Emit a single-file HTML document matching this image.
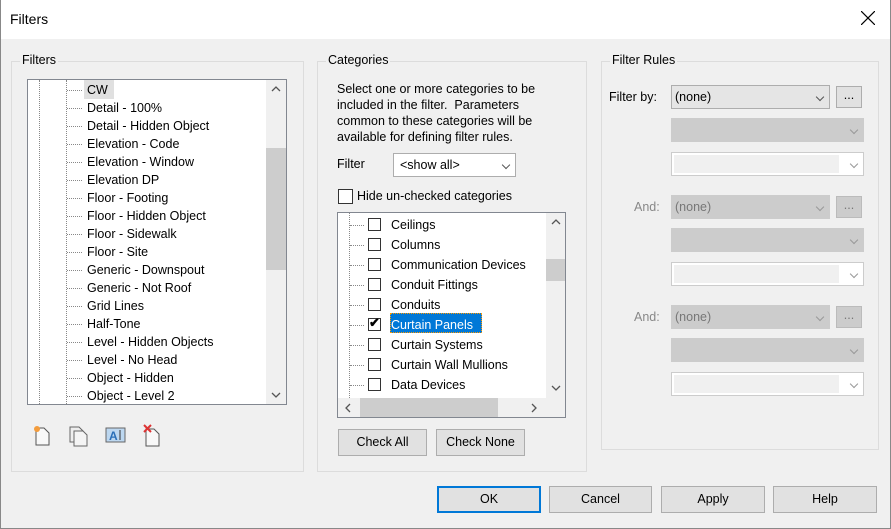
<!DOCTYPE html><html><head><style>
*{box-sizing:border-box}
body{margin:0;width:891px;height:529px;background:#f0f0f0;font-family:"Liberation Sans",sans-serif;font-size:12.5px;color:#000;position:relative;overflow:hidden}
.a{position:absolute}
.grp{position:absolute;border:1px solid #dcdcdc}
.lg{position:absolute;background:#f0f0f0;padding:0 2px;top:-9px;left:8px}
.btn{position:absolute;border:1px solid #adadad;background:#e1e1e1;text-align:center;line-height:24px}
.cb{position:absolute;width:13px;height:13px;border:1px solid #333;background:#fff}
.combo{position:absolute;border:1px solid #adadad;background:#e5e5e5;height:24px;line-height:22px;padding-left:3px}
.dis{background:#ccc;border-color:#ccc}
.chev{position:absolute;right:6px;top:8px;width:6px;height:6px;border-right:1px solid #555;border-bottom:1px solid #555;transform:rotate(45deg)}
.dl{position:absolute;border-left:1px dotted #888}
.dh{position:absolute;border-top:1px dotted #888}
</style></head><body>
<div class="a" style="left:0;top:0;width:891px;height:39px;background:#fff"></div>
<div class="a" style="left:0;top:0;width:1px;height:529px;background:#888"></div>
<div class="a" style="left:890px;top:0;width:1px;height:529px;background:#888"></div>
<div class="a" style="left:0;top:528px;width:891px;height:1px;background:#888"></div>
<div class="a" style="left:10px;top:11px;font-size:14px">Filters</div>
<svg class="a" style="left:861px;top:11px" width="14" height="14"><path d="M0 0L14 14M14 0L0 14" stroke="#000" stroke-width="1.2"/></svg>

<div class="grp" style="left:11px;top:61px;width:293px;height:411px"><span class="lg">Filters</span></div>
<div class="a" style="left:27px;top:79px;width:260px;height:326px;background:#fff;border:1px solid #828790;overflow:hidden">
<div class="dl" style="left:11px;top:0;height:326px"></div>
<div class="dl" style="left:38px;top:0;height:326px"></div>
<div id="fh"></div>
<div class="a" style="left:56px;top:0;width:30px;height:19px;background:#e0e0e0"></div>
<div class="a" style="left:59px;top:1px;line-height:18px">CW<br>Detail - 100%<br>Detail - Hidden Object<br>Elevation - Code<br>Elevation - Window<br>Elevation DP<br>Floor - Footing<br>Floor - Hidden Object<br>Floor - Sidewalk<br>Floor - Site<br>Generic - Downspout<br>Generic - Not Roof<br>Grid Lines<br>Half-Tone<br>Level - Hidden Objects<br>Level - No Head<br>Object - Hidden<br>Object - Level 2</div>
<div class="a" style="left:238px;top:0;width:20px;height:326px;background:#f0f0f0"></div>
<div class="a" style="left:238px;top:68px;width:20px;height:122px;background:#cdcdcd"></div>
<svg class="a" style="left:243px;top:6px" width="10" height="6"><path d="M1 5L5 1L9 5" stroke="#555" fill="none" stroke-width="1.3"/></svg>
<svg class="a" style="left:243px;top:312px" width="10" height="6"><path d="M1 1L5 5L9 1" stroke="#555" fill="none" stroke-width="1.3"/></svg>
</div>
<svg class="a" style="left:32px;top:424px" width="140" height="24">
<path d="M4 4h8l5 5v12H4z" fill="#f8f8f8" stroke="#555"/><circle cx="5" cy="5" r="3" fill="#f39c3c"/>
<path d="M38 3h9l4 4v11H38z" fill="#eee" stroke="#666"/><path d="M42 7h9l4 4v11H42z" fill="#f4f4f4" stroke="#666"/>
<rect x="74" y="4" width="19" height="14" fill="#bcd7f0" stroke="#666"/><text x="77" y="16" font-size="12" font-weight="bold" fill="#2a6fb8" font-family="Liberation Sans">A</text><path d="M88 6v10" stroke="#333"/>
<path d="M114 5h8l5 5v12H114z" fill="#f8f8f8" stroke="#555"/><path d="M112 1l7 7M119 1l-7 7" stroke="#d33" stroke-width="2"/>
</svg>

<div class="grp" style="left:317px;top:61px;width:270px;height:411px"><span class="lg">Categories</span></div>
<div class="a" style="left:337px;top:81px;line-height:16px">Select one or more categories to be<br>included in the filter.&nbsp; Parameters<br>common to these categories will be<br>available for defining filter rules.</div>
<div class="a" style="left:337px;top:157px">Filter</div>
<div class="combo" style="left:393px;top:153px;width:123px;background:#fff;padding-left:6px">&lt;show all&gt;<span class="chev"></span></div>
<div class="cb" style="left:338px;top:189px;width:15px;height:15px"></div>
<div class="a" style="left:357px;top:189px">Hide un-checked categories</div>
<div class="a" style="left:337px;top:212px;width:229px;height:206px;background:#fff;border:1px solid #828790;overflow:hidden">
<div class="dl" style="left:11px;top:0;height:185px"></div>
<div class="a" style="left:52px;top:100px;width:92px;height:20px;background:#0078d7;border:1px dotted #f90"></div>
<div class="a" style="left:53px;top:2px;line-height:20px">Ceilings<br>Columns<br>Communication Devices<br>Conduit Fittings<br>Conduits<br><span style="color:#fff">Curtain Panels</span><br>Curtain Systems<br>Curtain Wall Mullions<br>Data Devices</div>
<div id="cbs"></div>
<div class="a" style="left:208px;top:0;width:20px;height:185px;background:#f0f0f0"></div>
<div class="a" style="left:208px;top:46px;width:20px;height:22px;background:#cdcdcd"></div>
<div class="a" style="left:0;top:185px;width:228px;height:20px;background:#f0f0f0"></div>
<div class="a" style="left:22px;top:185px;width:138px;height:20px;background:#cdcdcd"></div>
<svg class="a" style="left:7px;top:190px" width="6" height="10"><path d="M5 1L1 5L5 9" stroke="#555" fill="none" stroke-width="1.3"/></svg>
<svg class="a" style="left:193px;top:190px" width="6" height="10"><path d="M1 1L5 5L1 9" stroke="#555" fill="none" stroke-width="1.3"/></svg>
<svg class="a" style="left:213px;top:6px" width="10" height="6"><path d="M1 5L5 1L9 5" stroke="#555" fill="none" stroke-width="1.3"/></svg>
<svg class="a" style="left:213px;top:172px" width="10" height="6"><path d="M1 1L5 5L9 1" stroke="#555" fill="none" stroke-width="1.3"/></svg>
</div>
<script>
var h='';for(var i=0;i<9;i++){var y=5+i*20;h+='<div class="dh" style="left:12px;top:'+(y+7)+'px;width:14px"></div><div class="cb" style="left:30px;top:'+y+'px;border-color:#333">'+(i==5?'<span style="position:absolute;left:0;top:-4px;font-size:13px;font-weight:bold">✔</span>':'')+'</div>';}
document.getElementById('cbs').innerHTML=h;
var f='';for(var j=0;j<18;j++){f+='<div class="dh" style="left:39px;top:'+(10+j*18)+'px;width:15px"></div>';}
document.getElementById('fh').innerHTML=f;
</script>
<div class="btn" style="left:338px;top:429px;width:89px;height:27px">Check All</div>
<div class="btn" style="left:436px;top:429px;width:89px;height:27px">Check None</div>

<div class="grp" style="left:601px;top:61px;width:278px;height:389px"><span class="lg">Filter Rules</span></div>
<div class="a" style="left:609px;top:90px">Filter by:</div>
<div class="combo" style="left:671px;top:85px;width:159px">(none)<span class="chev"></span></div>
<div class="btn" style="left:836px;top:86px;width:26px;height:22px;line-height:16px">...</div>
<div class="combo dis" style="left:671px;top:118px;width:193px"><span class="chev" style="border-color:#999"></span></div>
<div class="combo" style="left:671px;top:152px;width:193px;background:#fff;border-color:#ccc"><div class="a" style="left:2px;top:2px;width:165px;height:18px;background:#f0f0f0"></div><span class="chev" style="border-color:#999"></span></div>
<div class="a" style="left:634px;top:200px;color:#888">And:</div>
<div class="combo dis" style="left:671px;top:195px;width:159px;color:#777">(none)<span class="chev" style="border-color:#999"></span></div>
<div class="btn" style="left:836px;top:196px;width:26px;height:22px;line-height:16px;background:#ccc;border-color:#bbb;color:#777">...</div>
<div class="combo dis" style="left:671px;top:228px;width:193px"><span class="chev" style="border-color:#999"></span></div>
<div class="combo" style="left:671px;top:262px;width:193px;background:#fff;border-color:#ccc"><div class="a" style="left:2px;top:2px;width:165px;height:18px;background:#f0f0f0"></div><span class="chev" style="border-color:#999"></span></div>
<div class="a" style="left:634px;top:310px;color:#888">And:</div>
<div class="combo dis" style="left:671px;top:305px;width:159px;color:#777">(none)<span class="chev" style="border-color:#999"></span></div>
<div class="btn" style="left:836px;top:306px;width:26px;height:22px;line-height:16px;background:#ccc;border-color:#bbb;color:#777">...</div>
<div class="combo dis" style="left:671px;top:338px;width:193px"><span class="chev" style="border-color:#999"></span></div>
<div class="combo" style="left:671px;top:372px;width:193px;background:#fff;border-color:#ccc"><div class="a" style="left:2px;top:2px;width:165px;height:18px;background:#f0f0f0"></div><span class="chev" style="border-color:#999"></span></div>

<div class="btn" style="left:437px;top:486px;width:104px;height:27px;border:2px solid #0078d7;line-height:23px">OK</div>
<div class="btn" style="left:549px;top:486px;width:103px;height:27px">Cancel</div>
<div class="btn" style="left:661px;top:486px;width:104px;height:27px">Apply</div>
<div class="btn" style="left:773px;top:486px;width:104px;height:27px">Help</div>
</body></html>
